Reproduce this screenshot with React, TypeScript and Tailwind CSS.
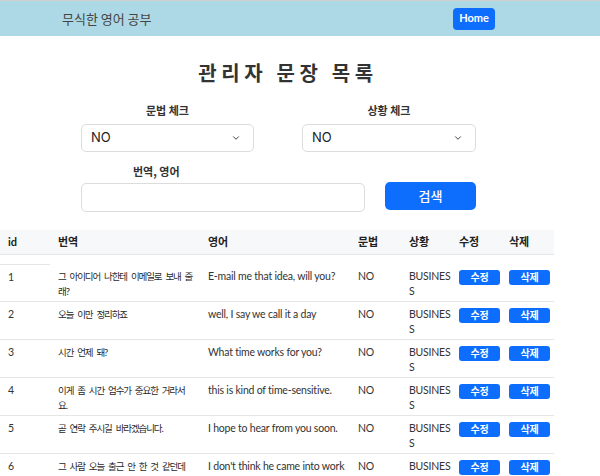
import React from "react";

const rows = [
  { id: 1, ko: ["그 아이디어 나한테 이메일로 보내 줄", "래?"], en: "E-mail me that idea, will you?" },
  { id: 2, ko: ["오늘 이만 정리하죠"], en: "well, I say we call it a day" },
  { id: 3, ko: ["시간 언제 돼?"], en: "What time works for you?" },
  { id: 4, ko: ["이게 좀 시간 엄수가 중요한 거라서", "요."], en: "this is kind of time-sensitive." },
  { id: 5, ko: ["곧 연락 주시길 바라겠습니다."], en: "I hope to hear from you soon." },
  { id: 6, ko: ["그 사람 오늘 출근 안 한 것 같던데", "요."], en: "I don't think he came into work today." },
];

const font = { fontFamily: '"Lato", "Noto Sans CJK KR", sans-serif' };

const Chevron = () => (
  <svg width="10" height="10" viewBox="0 0 16 16" fill="none" stroke="#444" strokeWidth="1.6" strokeLinecap="round" strokeLinejoin="round">
    <path d="M4 6l4 4 4-4" />
  </svg>
);

const SelectBox = () => (
  <div className="mt-[6px] flex h-[28px] items-center justify-between rounded-[5px] border border-[#dcdcdc] bg-white pl-[9px] pr-[12px]">
    <span className="text-[13px] text-[#222]" style={{ fontFamily: '"Inter", "Noto Sans CJK KR", sans-serif' }}>NO</span>
    <Chevron />
  </div>
);

const RowButton = ({ label }: { label: string }) => (
  <button className="mt-[1px] block h-[15px] w-[41px] rounded-[3px] bg-[#0d6efd] text-[10px] font-bold leading-[15px] text-white">
    {label}
  </button>
);

export default function App() {
  return (
    <div className="min-h-[476px] overflow-hidden bg-white" style={font}>
      <nav className="flex h-[36px] items-center justify-between border-t border-[#cfcfcf] bg-[#add8e6] pl-[62px] pr-[105px]">
        <span className="text-[13px] text-[#444]" style={{ fontFamily: '"Noto Sans CJK KR", sans-serif' }}>무식한 영어 공부</span>
        <button className="h-[22px] w-[42px] rounded-[4px] bg-[#0d6efd] text-[11px] font-bold text-white">Home</button>
      </nav>

      <h2
        className="mr-[24px] mt-[23px] text-center text-[20px] font-bold leading-[28px] tracking-[0.23em] text-[#333]"
        style={{ fontFamily: '"Noto Sans CJK KR", sans-serif' }}
      >
        관리자 문장 목록
      </h2>

      <div className="ml-[81px] w-[395px]" style={{ fontFamily: '"Noto Sans CJK KR", sans-serif' }}>
        <div className="mt-[15px] grid grid-cols-[173px_174px] justify-between">
          <div>
            <div className="text-center text-[11px] font-bold leading-[16px] text-[#333]">문법 체크</div>
            <SelectBox />
          </div>
          <div>
            <div className="text-center text-[11px] font-bold leading-[16px] text-[#333]">상황 체크</div>
            <SelectBox />
          </div>
        </div>
        <div className="ml-[52px] mt-[11px] text-[11px] font-bold leading-[16px] text-[#333]">번역, 영어</div>
        <div className="mt-[4px] flex items-start">
          <input className="h-[29px] w-[284px] rounded-[5px] border border-[#dcdcdc] bg-white px-2 outline-none" />
          <button className="ml-[20px] mt-[-1px] h-[28px] w-[91px] rounded-[5px] bg-[#0d6efd] text-[13px] font-medium text-white">
            검색
          </button>
        </div>
      </div>

      <table className="mt-[18px] w-[554px] table-fixed border-collapse text-[10.5px] tracking-[-0.02em] text-[#333]">
        <colgroup>
          <col className="w-[50px]" />
          <col className="w-[150px]" />
          <col className="w-[150px]" />
          <col className="w-[51px]" />
          <col className="w-[50px]" />
          <col className="w-[50px]" />
          <col className="w-[53px]" />
        </colgroup>
        <thead>
          <tr className="h-[24px] border-b border-[#e4e6e8] bg-[#f7f8f9] text-left text-[11px] font-bold tracking-normal text-[#222]">
            {["id", "번역", "영어", "문법", "상황", "수정", "삭제"].map((h) => (
              <th key={h} className="px-[8px] font-bold">{h}</th>
            ))}
          </tr>
        </thead>
        <tbody>
          <tr className="h-[10px]">
            <td className="border-b border-[#e4e6e8]" />
            <td colSpan={6} />
          </tr>
          {rows.map((r) => (
            <tr key={r.id} className="border-b border-[#e4e6e8] align-top leading-[15px]">
              <td className="px-[8px] pb-[2px] pt-[5px]">{r.id}</td>
              <td className="whitespace-nowrap pl-[8px] pr-[2px] pb-[2px] pt-[5px] text-[9.5px] text-[#2a2a2a] tracking-[-1.1px] [word-spacing:2.6px]">
                {r.ko.map((line, i) => (
                  <div key={i} className="h-[15px]">{line}</div>
                ))}
              </td>
              <td className="pl-[8px] pr-[4px] pb-[2px] pt-[5px]">{r.en}</td>
              <td className="px-[8px] pb-[2px] pt-[5px]">NO</td>
              <td className="break-all pl-[8px] pr-0 pb-[2px] pt-[5px]">BUSINESS</td>
              <td className="pl-[8px] pt-[5px]">
                <RowButton label="수정" />
              </td>
              <td className="pl-[8px] pt-[5px]">
                <RowButton label="삭제" />
              </td>
            </tr>
          ))}
        </tbody>
      </table>
    </div>
  );
}
